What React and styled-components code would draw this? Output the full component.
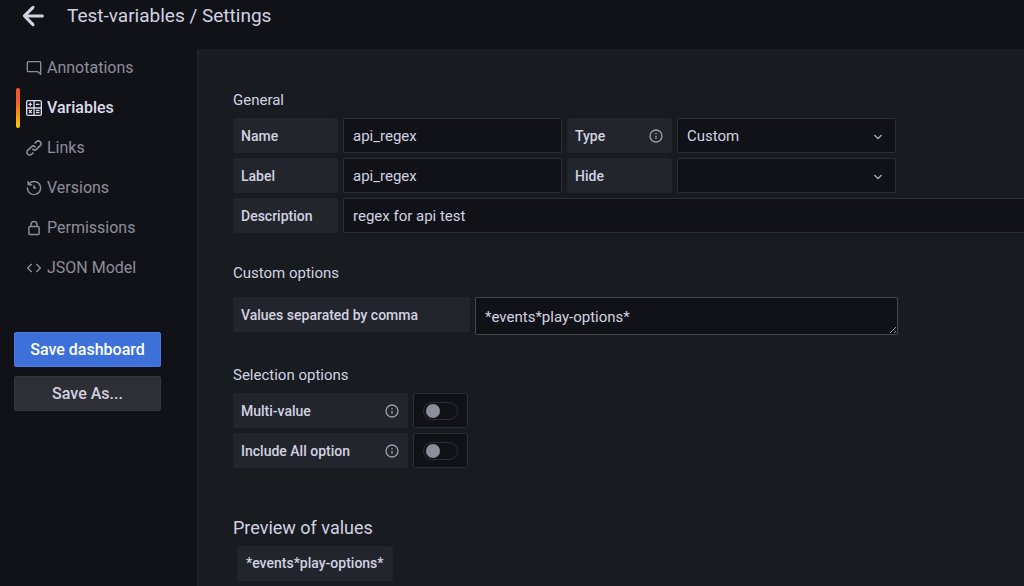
import React, { useState } from 'react'
import styled, { createGlobalStyle } from 'styled-components'

const GlobalStyle = createGlobalStyle`
    *, *::before, *::after {
        box-sizing: border-box;
    }
    body {
        margin: 0;
        background-color: #111217;
        color: #d2d2e2;
        font-family: Roboto, "Liberation Sans", sans-serif;
        font-size: 16px;
        line-height: 22px;
    }
`

const Container = styled.div`
    min-height: 100vh;
    display: flex;
    flex-direction: column;
`

const Header = styled.header`
    display: flex;
    align-items: flex-start;
    gap: 21px;
    height: 48px;
    padding: 4px 21px;
`

const BackButton = styled.button`
    display: flex;
    padding: 0;
    border: none;
    background: none;
    color: #d2d2e2;
    cursor: pointer;
`

const Title = styled.h1`
    margin: 0;
    font-size: 19px;
    font-weight: 400;
    line-height: 24px;
`

const Wrapper = styled.div`
    flex: 1;
    display: flex;
`

const Sidebar = styled.aside`
    flex: none;
    width: 197px;
    padding: 0 36px 0 14px;
`

const Nav = styled.nav`
    display: flex;
    flex-direction: column;
    padding-left: 2px;
`

const NavLink = styled.a`
    display: flex;
    align-items: center;
    height: 40px;
    color: ${(props) => (props.$active ? '#dcdcec' : '#8e8e9b')};
    font-weight: ${(props) => (props.$active ? 500 : 400)};
    text-decoration: none;
    white-space: nowrap;

    &::before {
        content: "";
        width: 4px;
        height: 100%;
        margin-right: 6px;
        border-radius: 2px;
        background: ${(props) => (props.$active ? 'linear-gradient(#f05a28 30%, #fbca0a)' : 'none')};
    }

    svg {
        margin-right: 5px;
    }
`

const Actions = styled.div`
    display: flex;
    flex-direction: column;
    gap: 9px;
    margin-top: 44px;
`

const Button = styled.button`
    height: 35px;
    padding: 0;
    border: 1px solid ${(props) => (props.$primary ? '#4a7ce0' : '#35363b')};
    border-radius: 2px;
    background-color: ${(props) => (props.$primary ? '#3d71d9' : '#2e2f34')};
    color: ${(props) => (props.$primary ? '#ffffff' : '#d2d2e2')};
    font-family: inherit;
    font-size: 16px;
    font-weight: 500;
    cursor: pointer;
`

const Panel = styled.main`
    flex: 1;
    min-width: 0;
    overflow: hidden;
    margin-top: 1px;
    padding: 39px 0 4px 35px;
    border-left: 1px solid #25272c;
    background-color: #181b1f;
`

const Section = styled.section`
    margin-bottom: 28px;
`

const SectionTitle = styled.h2`
    margin: 0 0 ${(props) => (props.$loose ? 12 : 6)}px;
    font-size: ${(props) => (props.$large ? 18 : 15)}px;
    font-weight: 400;
    line-height: 24px;
`

const Rows = styled.div`
    display: flex;
    flex-direction: column;
    gap: 5px;
`

const Row = styled.div`
    display: flex;
    align-items: flex-start;
    gap: 5px;
`

const Label = styled.label`
    flex: none;
    display: flex;
    align-items: center;
    justify-content: space-between;
    width: ${(props) => props.$width}px;
    height: 35px;
    padding: 0 8px;
    border-radius: 3px;
    background-color: #22252b;
    font-size: 14px;
    font-weight: 500;

    svg {
        color: #9c9caa;
    }
`

const Input = styled.input`
    flex: none;
    width: ${(props) => (props.$wide ? 880 : 219)}px;
    height: 35px;
    padding: 0 9px;
    border: 1px solid #2c2e33;
    border-radius: 2px;
    outline: none;
    background-color: #111217;
    color: inherit;
    font-family: inherit;
    font-size: 15px;
`

const TextArea = styled.textarea`
    flex: none;
    width: 423px;
    height: 38px;
    padding: 8px 9px;
    border: 1px solid #44464c;
    border-radius: 2px;
    outline: none;
    overflow: hidden;
    background-color: #111217;
    color: inherit;
    font-family: inherit;
    font-size: 15px;
    line-height: 22px;
`

const SelectBox = styled.div`
    flex: none;
    display: grid;
    align-items: center;
    width: 219px;

    > * {
        grid-area: 1 / 1;
    }

    svg {
        justify-self: end;
        margin: 2px 9px 0 0;
        color: #a4a4b2;
        pointer-events: none;
    }
`

const SelectInput = styled.select`
    appearance: none;
    width: 100%;
    height: 35px;
    padding: 0 30px 0 9px;
    border: 1px solid #2c2e33;
    border-radius: 2px;
    outline: none;
    background-color: #111217;
    color: inherit;
    font-family: inherit;
    font-size: 15px;
`

const SwitchBox = styled.div`
    display: flex;
    align-items: center;
    justify-content: center;
    width: 55px;
    height: 35px;
    border: 1px solid #2c2e33;
    border-radius: 2px;
    background-color: #111217;
`

const Switch = styled.input`
    appearance: none;
    display: flex;
    align-items: center;
    width: 35px;
    height: 18px;
    margin: 0;
    padding: 0 2px;
    border: 1px solid #2c2e33;
    border-radius: 9px;
    cursor: pointer;

    &::before {
        content: "";
        width: 14px;
        height: 14px;
        border-radius: 50%;
        background-color: #8e8e9b;
    }

    &:checked {
        justify-content: flex-end;
        background-color: #3d71d9;
    }
`

const Preview = styled.section`
    margin-top: 48px;
`

const Values = styled.div`
    display: flex;
    flex-wrap: wrap;
    gap: 4px;
    padding-left: 4px;
`

const Value = styled.span`
    padding: 6px 9px 7px;
    border-radius: 3px;
    background-color: #22252b;
    font-size: 14px;
    font-weight: 500;
`

const Icon = ({ size = 16, children }) => (
    <svg width={size} height={size} viewBox="0 0 24 24" fill="currentColor" aria-hidden="true">
        {children}
    </svg>
)

const ArrowLeftIcon = () => (
    <Icon size={25}>
        <path d="M20.5 11.5H3.5M11.5 3.3L3.3 11.5l8.2 8.2" fill="none" stroke="currentColor" strokeWidth="3" strokeLinecap="round" strokeLinejoin="round" />
    </Icon>
)

const CommentIcon = () => (
    <Icon>
        <path d="M20.5 1.5H3.5A2.5 2.5 0 0 0 1 4v12a2.5 2.5 0 0 0 2.5 2.5h13.6l4.2 3.8a1 1 0 0 0 1.7-.8V4a2.5 2.5 0 0 0-2.5-2.5ZM21 19.3l-2.6-2.5a1 1 0 0 0-.7-.3H3.5A.5.5 0 0 1 3 16V4a.5.5 0 0 1 .5-.5h17a.5.5 0 0 1 .5.5Z" />
    </Icon>
)

const CalculatorIcon = () => (
    <Icon>
        <g fill="none" stroke="currentColor" strokeWidth="2" strokeLinecap="round">
            <rect x="1" y="1" width="22" height="22" rx="2" />
            <path d="M12 1v22M1 12h22M4.5 6.5h4M6.5 4.5v4M15.5 6.5h4M5 15.7l3.2 3.2M8.2 15.7L5 18.9M15.5 15.8h4M15.5 19h4" />
        </g>
    </Icon>
)

const LinkIcon = () => (
    <Icon>
        <path transform="translate(-2 -2) scale(1.167)" d="M10,17.55,8.23,19.27a2.47,2.47,0,0,1-3.5-3.5l4.54-4.55a2.46,2.46,0,0,1,3.39-.09l.12.1a1,1,0,0,0,1.4-1.43A2.75,2.75,0,0,0,14,9.59a4.46,4.46,0,0,0-6.09.22L3.31,14.36a4.48,4.48,0,0,0,6.33,6.33L11.37,19A1,1,0,0,0,10,17.55ZM20.69,3.31a4.49,4.49,0,0,0-6.33,0L12.63,5A1,1,0,0,0,14,6.45l1.73-1.72a2.47,2.47,0,0,1,3.5,3.5l-4.54,4.55a2.46,2.46,0,0,1-3.39.09l-.12-.1a1,1,0,0,0-1.4,1.43,2.75,2.75,0,0,0,.23.21,4.47,4.47,0,0,0,6.09-.22l4.55-4.55A4.49,4.49,0,0,0,20.69,3.31Z" />
    </Icon>
)

const HistoryIcon = () => (
    <Icon>
        <path transform="translate(-1.2 -1.2) scale(1.1)" d="M12,2A10,10,0,0,0,5.12,4.77V3a1,1,0,0,0-2,0V7.5a1,1,0,0,0,1,1H8.62a1,1,0,0,0,0-2H6.22A8,8,0,1,1,4,12a1,1,0,0,0-2,0A10,10,0,1,0,12,2Zm0,6a1,1,0,0,0-1,1v3a1,1,0,0,0,1,1h2a1,1,0,0,0,0-2H13V9A1,1,0,0,0,12,8Z" />
    </Icon>
)

const LockIcon = () => (
    <Icon>
        <path transform="translate(-1.2 -1.2) scale(1.1)" d="M17,9V7A5,5,0,0,0,7,7V9a3,3,0,0,0-3,3v7a3,3,0,0,0,3,3H17a3,3,0,0,0,3-3V12A3,3,0,0,0,17,9ZM9,7a3,3,0,0,1,6,0V9H9Zm9,12a1,1,0,0,1-1,1H7a1,1,0,0,1-1-1V12a1,1,0,0,1,1-1H17a1,1,0,0,1,1,1Z" />
    </Icon>
)

const CodeIcon = () => (
    <Icon>
        <path d="M8 6.5L2.5 12l5.5 5.5M16 6.5l5.5 5.5-5.5 5.5" fill="none" stroke="currentColor" strokeWidth="2" strokeLinecap="round" strokeLinejoin="round" />
    </Icon>
)

const InfoIcon = () => (
    <Icon size={16}>
        <path d="M12,2A10,10,0,1,0,22,12,10,10,0,0,0,12,2Zm0,18a8,8,0,1,1,8-8A8,8,0,0,1,12,20Zm0-8.5a1,1,0,0,0-1,1v3a1,1,0,0,0,2,0v-3A1,1,0,0,0,12,11.5Zm0-4a1.25,1.25,0,1,0,1.25,1.25A1.25,1.25,0,0,0,12,7.5Z" />
    </Icon>
)

const AngleDownIcon = () => (
    <Icon size={18}>
        <path d="M17,9.17a1,1,0,0,0-1.41,0L12,12.71,8.46,9.17a1,1,0,0,0-1.41,0,1,1,0,0,0,0,1.42l4.24,4.24a1,1,0,0,0,1.42,0L17,10.59A1,1,0,0,0,17,9.17Z" />
    </Icon>
)

const links = [
    { title: 'Annotations', icon: CommentIcon },
    { title: 'Variables', icon: CalculatorIcon },
    { title: 'Links', icon: LinkIcon },
    { title: 'Versions', icon: HistoryIcon },
    { title: 'Permissions', icon: LockIcon },
    { title: 'JSON Model', icon: CodeIcon },
]

const App = () => {
    const [active, setActive] = useState('Variables')
    const [options, setOptions] = useState('*events*play-options*')

    const handleClick = (e, title) => {
        e.preventDefault()
        setActive(title)
    }

    return (
        <Container>
            <GlobalStyle />
            <Header>
                <BackButton aria-label="Go back">
                    <ArrowLeftIcon />
                </BackButton>
                <Title>Test-variables / Settings</Title>
            </Header>
            <Wrapper>
                <Sidebar>
                    <Nav>
                        {links.map(({ title, icon: LinkGlyph }) => (
                            <NavLink href="#" key={title} $active={title === active} onClick={(e) => handleClick(e, title)}>
                                <LinkGlyph />
                                {title}
                            </NavLink>
                        ))}
                    </Nav>
                    <Actions>
                        <Button $primary>Save dashboard</Button>
                        <Button>Save As...</Button>
                    </Actions>
                </Sidebar>
                <Panel>
                    <Section>
                        <SectionTitle>General</SectionTitle>
                        <Rows>
                            <Row>
                                <Label htmlFor="name" $width={105}>Name</Label>
                                <Input id="name" defaultValue="api_regex" />
                                <Label htmlFor="type" $width={105}>Type <InfoIcon /></Label>
                                <SelectBox>
                                    <SelectInput id="type">
                                        <option>Custom</option>
                                    </SelectInput>
                                    <AngleDownIcon />
                                </SelectBox>
                            </Row>
                            <Row>
                                <Label htmlFor="label" $width={105}>Label</Label>
                                <Input id="label" defaultValue="api_regex" />
                                <Label htmlFor="hide" $width={105}>Hide</Label>
                                <SelectBox>
                                    <SelectInput id="hide">
                                        <option></option>
                                    </SelectInput>
                                    <AngleDownIcon />
                                </SelectBox>
                            </Row>
                            <Row>
                                <Label htmlFor="description" $width={105}>Description</Label>
                                <Input id="description" $wide defaultValue="regex for api test" />
                            </Row>
                        </Rows>
                    </Section>
                    <Section>
                        <SectionTitle $loose>Custom options</SectionTitle>
                        <Row>
                            <Label htmlFor="values" $width={237}>Values separated by comma</Label>
                            <TextArea id="values" rows={1} value={options} onChange={(e) => setOptions(e.target.value)} />
                        </Row>
                    </Section>
                    <Section>
                        <SectionTitle>Selection options</SectionTitle>
                        <Rows>
                            <Row>
                                <Label htmlFor="multi" $width={175}>Multi-value <InfoIcon /></Label>
                                <SwitchBox>
                                    <Switch id="multi" type="checkbox" />
                                </SwitchBox>
                            </Row>
                            <Row>
                                <Label htmlFor="all" $width={175}>Include All option <InfoIcon /></Label>
                                <SwitchBox>
                                    <Switch id="all" type="checkbox" />
                                </SwitchBox>
                            </Row>
                        </Rows>
                    </Section>
                    <Preview>
                        <SectionTitle $large>Preview of values</SectionTitle>
                        <Values>
                            {options.split(',').map((value, index) => (
                                <Value key={index}>{value.trim()}</Value>
                            ))}
                        </Values>
                    </Preview>
                </Panel>
            </Wrapper>
        </Container>
    )
}

export default App
